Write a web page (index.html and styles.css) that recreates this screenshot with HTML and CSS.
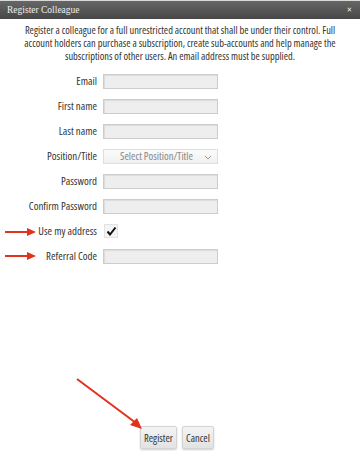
FILE: index.html
```html
<!DOCTYPE html>
<html>
<head>
<meta charset="utf-8">
<link rel="stylesheet" href="styles.css">
</head>
<body>
<div class="dialog">
  <div class="titlebar">
    <span class="title">Register Colleague</span>
    <span class="close">&#x2715;</span>
  </div>
  <p class="intro">Register a colleague for a full unrestricted account that shall be under their control. Full<br>account holders can purchase a subscription, create sub-accounts and help manage the<br>subscriptions of other users. An email address must be supplied.</p>
  <div class="form">
    <label class="lbl">Email</label><div class="field"><span class="input"></span></div>
    <label class="lbl">First name</label><div class="field"><span class="input"></span></div>
    <label class="lbl">Last name</label><div class="field"><span class="input"></span></div>
    <label class="lbl">Position/Title</label><div class="field"><span class="select">Select Position/Title<svg class="chev" width="8" height="5" viewBox="0 0 8 5"><path d="M1 1 L4 4 L7 1" fill="none" stroke="#999" stroke-width="1"/></svg></span></div>
    <label class="lbl">Password</label><div class="field"><span class="input"></span></div>
    <label class="lbl">Confirm Password</label><div class="field"><span class="input"></span></div>
    <label class="lbl">Use my address</label><div class="field"><span class="check"><svg width="11" height="10" viewBox="0 0 11 10"><path d="M1.5 5.5 L4 8.5 L9.5 1.5" fill="none" stroke="#111" stroke-width="2"/></svg></span></div>
    <label class="lbl">Referral Code</label><div class="field"><span class="input"></span></div>
  </div>
  <div class="buttons">
    <button class="btn">Register</button>
    <button class="btn">Cancel</button>
  </div>
  <svg class="arrow arrow1" width="32" height="10" viewBox="0 0 32 10"><path d="M0 5 H24" stroke="#e0321c" stroke-width="2"/><path d="M22 1 L31 5 L22 9 Z" fill="#e0321c"/></svg>
  <svg class="arrow arrow2" width="32" height="10" viewBox="0 0 32 10"><path d="M0 5 H24" stroke="#e0321c" stroke-width="2"/><path d="M22 1 L31 5 L22 9 Z" fill="#e0321c"/></svg>
  <svg class="arrow arrow3" width="70" height="54" viewBox="0 0 70 54"><path d="M1 1 L60 45" stroke="#e0321c" stroke-width="2"/><path d="M66 51 L54 47 L61 40 Z" fill="#e0321c"/></svg>
</div>
</body>
</html>
```
FILE: styles.css
```css
html, body { margin: 0; padding: 0; background: #fff; }
body { width: 360px; height: 456px; overflow: hidden; }
.dialog {
  position: relative;
  width: 360px;
  height: 456px;
  font-family: "Open Sans", "Liberation Sans", sans-serif;
  font-stretch: 81%;
  color: #333;
  border-top: 1px solid #d8d8d8;
  box-sizing: border-box;
}
.titlebar {
  height: 18px;
  background: linear-gradient(#666, #474747);
  display: flex;
  align-items: center;
  justify-content: space-between;
  padding: 0 8px 0 7px;
}
.title {
  font-family: "Liberation Serif", "DejaVu Serif", serif;
  font-size: 9.5px;
  color: #eee;
}
.close {
  color: #eee;
  font-size: 7px;
  font-weight: bold;
  font-family: "DejaVu Sans", sans-serif;
}
.intro {
  margin: 5px 0 0;
  font-size: 10.4px;
  line-height: 13px;
  text-align: center;
  color: #333;
  white-space: nowrap;
}
.form {
  display: grid;
  grid-template-columns: 97px 115px;
  column-gap: 6px;
  row-gap: 9px;
  margin-top: 10px;
  align-items: center;
}
.lbl {
  text-align: right;
  font-size: 10.9px;
  color: #333;
  line-height: 16px;
}
.field { height: 16px; display: flex; align-items: center; }
.input {
  display: block;
  width: 115px;
  height: 15px;
  box-sizing: border-box;
  background: #eeeeee;
  border: 1px solid #cccccc;
  box-shadow: inset 1px 1px 1px rgba(0,0,0,0.08);
}
.select {
  position: relative;
  display: flex;
  align-items: center;
  justify-content: center;
  width: 115px;
  height: 15px;
  box-sizing: border-box;
  background: linear-gradient(#fbfbfb, #f0f0f0);
  border: 1px solid #dedede;
  font-size: 10.7px;
  color: #888;
  padding-right: 8px;
}
.chev { position: absolute; right: 5px; top: 5px; }
.check {
  display: flex;
  align-items: center;
  justify-content: center;
  width: 14px;
  height: 14px;
  margin-left: 1px;
  box-sizing: border-box;
  background: #f4f4f4;
  border: 1px solid #e2e2e2;
}
.buttons {
  display: flex;
  gap: 5px;
  padding-left: 140px;
  margin-top: 162px;
}
.btn {
  font-family: "Open Sans", "Liberation Sans", sans-serif;
  font-stretch: 81%;
  font-size: 10.5px;
  color: #333;
  height: 23px;
  padding: 0 3px;
  background: linear-gradient(#f4f4f4, #e2e2e2);
  border: 1px solid #d4d4d4;
  border-radius: 2px;
  box-shadow: 0 1px 2px rgba(0,0,0,0.2);
}
.arrow { position: absolute; }
.arrow1 { left: 5px; top: 226px; }
.arrow2 { left: 5px; top: 250px; }
.arrow3 { left: 76px; top: 377px; }
```
